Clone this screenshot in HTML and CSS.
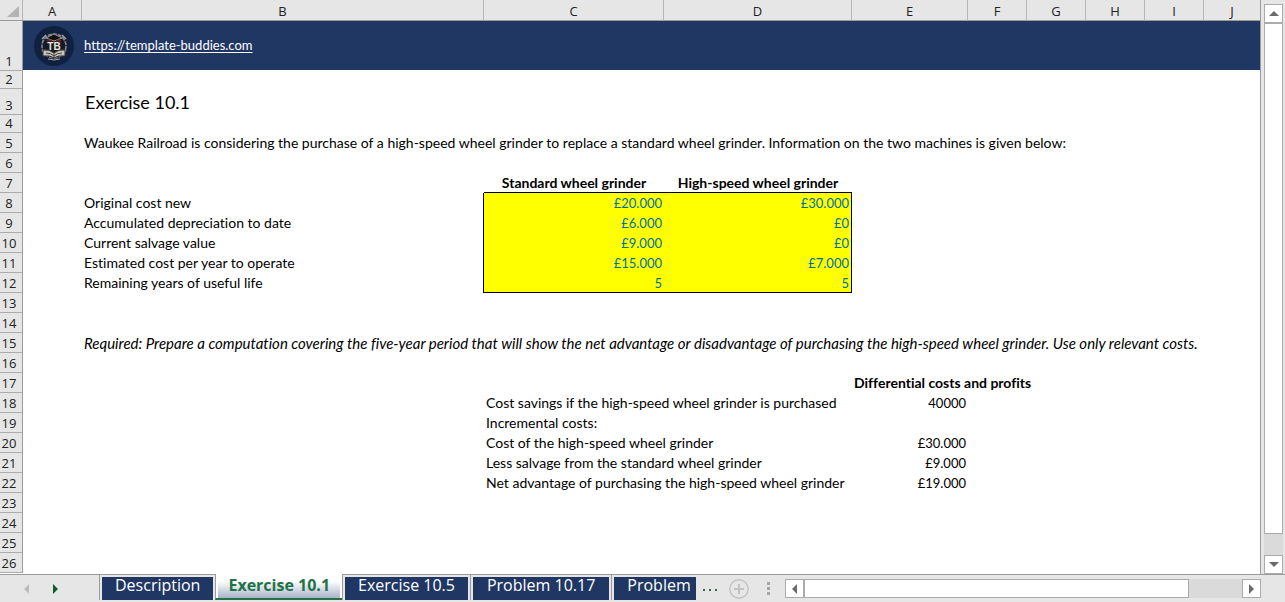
FILE: index.html
```html
<!DOCTYPE html>
<html lang="en">
<head>
<meta charset="utf-8">
<title>Exercise 10.1</title>
<link rel="stylesheet" href="styles.css">
</head>
<body>
<div class="workbook">
  <div class="main">
    <div class="sheet">
      <table class="grid">
        <colgroup>
          <col class="w-head"><col class="w-unit"><col class="w-b"><col class="w-c"><col class="w-d"><col class="w-e"><col class="w-unit"><col class="w-unit"><col class="w-unit"><col class="w-unit"><col>
        </colgroup>
        <thead>
          <tr><th class="corner"><svg width="12" height="11" viewBox="0 0 12 11" aria-hidden="true"><path d="M12 0v11H0z" fill="#b4b4b4"/></svg></th><th scope="col">A</th><th scope="col">B</th><th scope="col">C</th><th scope="col">D</th><th scope="col">E</th><th scope="col">F</th><th scope="col">G</th><th scope="col">H</th><th scope="col">I</th><th scope="col">J</th></tr>
        </thead>
        <tbody>
          <tr class="banner"><th scope="row">1</th>
            <td class="logo-cell"><svg class="logo" width="40" height="40" viewBox="0 0 40 40" role="img" aria-label="Template Buddies">
              <circle cx="20" cy="20" r="20" fill="#10213f"/>
              <circle cx="20" cy="20" r="12" fill="#171a22" stroke="#85888a" stroke-width="1.6" stroke-dasharray="4 1"/>
              <path d="M12 12l8-4 8 4-8 3z" fill="#111" stroke="#9b9a98" stroke-width="1"/>
              <path d="M13 14.500h5M22 14.500h5" stroke="#6b2529" stroke-width="2"/>
              <path d="M8 13l4-4M32 13l-4-4M8 24l3 4M32 24l-3 4" stroke="#a4a29d" stroke-width="1.5"/>
              <path d="M9 24q6-1 11 3q5-4 11-3v6q-7-1-11 2q-4-3-11-2z" fill="#c9c4bb" stroke="#343434"/>
              <path d="M20 27v5M12 27q5 0 8 3q3-3 8-3" fill="none" stroke="#45413e"/>
              <path d="M14 33q6 2 12 0" fill="none" stroke="#aaa69f"/>
              <text x="20" y="24" text-anchor="middle" class="logo-text">TB</text>
            </svg></td>
            <td class="link-cell"><a href="https://template-buddies.com">https://template-buddies.com</a></td><td colspan="8"></td></tr>
          <tr class="short"><th scope="row">2</th><td colspan="10"></td></tr>
          <tr class="title"><th scope="row">3</th><td></td><td colspan="9">Exercise 10.1</td></tr>
          <tr class="short"><th scope="row">4</th><td colspan="10"></td></tr>
          <tr><th scope="row">5</th><td></td><td colspan="9">Waukee Railroad is considering the purchase of a high-speed wheel grinder to replace a standard wheel grinder. Information on the two machines is given below:</td></tr>
          <tr><th scope="row">6</th><td colspan="10"></td></tr>
          <tr><th scope="row">7</th><td></td><td></td><td class="heading center rule-bottom">Standard wheel grinder</td><td class="heading center rule-bottom">High-speed wheel grinder</td><td colspan="6"></td></tr>
          <tr><th scope="row">8</th><td></td><td class="rule-right">Original cost new</td><td class="number input">£20.000</td><td class="number input rule-right">£30.000</td><td colspan="6"></td></tr>
          <tr><th scope="row">9</th><td></td><td class="rule-right">Accumulated depreciation to date</td><td class="number input">£6.000</td><td class="number input rule-right">£0</td><td colspan="6"></td></tr>
          <tr><th scope="row">10</th><td></td><td class="rule-right">Current salvage value</td><td class="number input">£9.000</td><td class="number input rule-right">£0</td><td colspan="6"></td></tr>
          <tr><th scope="row">11</th><td></td><td class="rule-right">Estimated cost per year to operate</td><td class="number input">£15.000</td><td class="number input rule-right">£7.000</td><td colspan="6"></td></tr>
          <tr><th scope="row">12</th><td></td><td class="rule-right">Remaining years of useful life</td><td class="number input rule-bottom">5</td><td class="number input rule-right rule-bottom">5</td><td colspan="6"></td></tr>
          <tr><th scope="row">13</th><td colspan="10"></td></tr>
          <tr><th scope="row">14</th><td colspan="10"></td></tr>
          <tr><th scope="row">15</th><td></td><td colspan="9" class="required">Required: Prepare a computation covering the five-year period that will show the net advantage or disadvantage of purchasing the high-speed wheel grinder. Use only relevant costs.</td></tr>
          <tr><th scope="row">16</th><td colspan="10"></td></tr>
          <tr><th scope="row">17</th><td colspan="4"></td><td colspan="6" class="heading">Differential costs and profits</td></tr>
          <tr><th scope="row">18</th><td></td><td></td><td colspan="2">Cost savings if the high-speed wheel grinder is purchased</td><td class="number">40000</td><td colspan="5"></td></tr>
          <tr><th scope="row">19</th><td></td><td></td><td colspan="2">Incremental costs:</td><td colspan="6"></td></tr>
          <tr><th scope="row">20</th><td></td><td></td><td colspan="2">Cost of the high-speed wheel grinder</td><td class="number">£30.000</td><td colspan="5"></td></tr>
          <tr><th scope="row">21</th><td></td><td></td><td colspan="2">Less salvage from the standard wheel grinder</td><td class="number">£9.000</td><td colspan="5"></td></tr>
          <tr><th scope="row">22</th><td></td><td></td><td colspan="2">Net advantage of purchasing the high-speed wheel grinder</td><td class="number">£19.000</td><td colspan="5"></td></tr>
          <tr><th scope="row">23</th><td colspan="10"></td></tr>
          <tr><th scope="row">24</th><td colspan="10"></td></tr>
          <tr><th scope="row">25</th><td colspan="10"></td></tr>
          <tr><th scope="row">26</th><td colspan="10"></td></tr>
        </tbody>
      </table>
    </div>
    <div class="vscroll">
      <button class="arrow" aria-label="Scroll up"><svg width="10" height="5" viewBox="0 0 10 5"><path d="M5 0l5 5H0z"/></svg></button>
      <div class="track"><div class="thumb"></div></div>
      <button class="arrow" aria-label="Scroll down"><svg width="10" height="5" viewBox="0 0 10 5"><path d="M0 0h10L5 5z"/></svg></button>
    </div>
  </div>
  <div class="footer">
    <div class="nav">
      <button aria-label="Previous sheet" disabled><svg width="5" height="10" viewBox="0 0 5 10"><path d="M5 0v10L0 5z" fill="#bdbdbd"/></svg></button>
      <button aria-label="Next sheet"><svg width="5" height="10" viewBox="0 0 5 10"><path d="M0 0l5 5-5 5z" fill="#0f5c33"/></svg></button>
    </div>
    <div class="tabs">
      <div class="slot"><button class="tab">Description</button></div>
      <div class="slot current"><button class="tab">Exercise 10.1</button></div>
      <div class="slot after-current"><button class="tab">Exercise 10.5</button></div>
      <div class="slot"><button class="tab wide">Problem 10.17</button></div>
      <div class="slot"><button class="tab cut">Problem</button></div>
    </div>
    <button class="more" aria-label="More sheets"><svg width="14" height="2" viewBox="0 0 14 2" fill="#217346"><path d="M0 0h2v2H0zM6 0h2v2H6zM12 0h2v2h-2z"/></svg></button>
    <button class="add" aria-label="New sheet"><svg width="20" height="20" viewBox="0 0 20 20" fill="none" stroke="#c3c3c3"><circle cx="10" cy="10" r="9.2" stroke-width="1.4"/><path d="M10 5v10M5 10h10" stroke-width="2"/></svg></button>
    <svg class="grip" width="3" height="13" viewBox="0 0 3 13" fill="#a6a6a6" aria-hidden="true"><path d="M0 0h3v3H0zM0 5h3v3H0zM0 10h3v3H0z"/></svg>
    <div class="hscroll">
      <button class="arrow" aria-label="Scroll left"><svg width="5" height="10" viewBox="0 0 5 10"><path d="M5 0v10L0 5z"/></svg></button>
      <div class="track"><div class="thumb"></div></div>
      <button class="arrow" aria-label="Scroll right"><svg width="5" height="10" viewBox="0 0 5 10"><path d="M0 0l5 5-5 5z"/></svg></button>
    </div>
  </div>
</div>
</body>
</html>
```
FILE: styles.css
```css
* { box-sizing: border-box; }
body { margin: 0; background: #e6e6e6; }
button { margin: 0; padding: 0; border: 0; background: none; font: inherit; }
svg { display: block; }

.workbook { display: flex; flex-direction: column; height: 100vh; overflow: hidden; }
.main { display: flex; flex: 1; min-height: 0; }
.sheet { flex: 1; min-width: 0; overflow: hidden; background: #fff; border-right: 1px solid #9b9b9b; }

.grid { width: 100%; table-layout: fixed; border-collapse: separate; border-spacing: 0; font: 14px/18px Lato, Carlito, sans-serif; font-variant-ligatures: none; color: #000; }
.w-head { width: 23px; }
.w-unit { width: 59px; }
.w-b { width: 402px; }
.w-c { width: 180px; }
.w-d { width: 188px; }
.w-e { width: 116px; }

.grid tr { height: 20px; }
.grid td { padding: 0 2px 1px; white-space: nowrap; vertical-align: bottom; }
.grid th { padding: 0; background: #e6e6e6; font: 13px/18px "Open Sans", "Noto Sans", sans-serif; color: #222; text-align: center; vertical-align: bottom; }
.grid thead tr { height: 21px; }
.grid thead th { padding-top: 2px; border-bottom: 1px solid #9b9b9b; border-right: 1px solid #b5b5b5; }
.grid thead th:last-child { border-right: 0; }
.grid tbody th { border-right: 1px solid #9b9b9b; border-bottom: 1px solid #ababab; padding-right: 4px; }
.grid .corner svg { margin: 0 0 3px 7px; }

.grid .banner { height: 50px; }
.grid .short { height: 18px; }
.grid .short th { line-height: 17px; }
.grid .title { height: 26px; }
.grid .title td { font-size: 18px; line-height: 24px; padding-left: 3px; }
.grid .banner td { background: #203764; border-bottom: 1px solid #fff; vertical-align: middle; }
.grid .banner .logo-cell { padding: 0 0 0 11px; }
.banner a { color: #fff; font-size: 13px; text-underline-offset: 2px; }
.logo-text { font: bold 10px "Liberation Sans", sans-serif; fill: #e9e5dd; }

.grid .heading { font-weight: bold; }
.grid .center { text-align: center; }
.grid .number { font-size: 13px; text-align: right; }
.grid .required { font-size: 15px; font-style: italic; }
.grid .input { background: #ff0; color: #0070a0; }
.grid .rule-right { border-right: 1px solid #000; }
.grid .rule-bottom { padding-bottom: 0; border-bottom: 1px solid #000; }

.vscroll { display: flex; flex-direction: column; width: 24px; padding: 4px 2px 0 3px; }
.arrow { display: flex; flex: 0 0 19px; align-items: center; justify-content: center; border: 1px solid #ababab; background: #fff; fill: #6a6a6a; }
.track { display: flex; flex: 1; min-width: 0; min-height: 0; background: #dadada; }
.vscroll .track { flex-direction: column; }
.thumb { background: #fff; border: 1px solid #ababab; }
.vscroll .thumb { height: 96%; }

.footer { display: flex; flex: 0 0 28px; padding-right: 24px; border-top: 1px solid #9b9b9b; font: 16px/20px "Open Sans", "Noto Sans", sans-serif; }
.nav { display: flex; flex: 0 0 99px; align-items: center; gap: 24px; padding-left: 24px; }
.tabs { display: flex; flex: none; align-items: flex-start; }
.slot { padding: 2px 2px 0; border-left: 1px solid #9b9b9b; }
.tab { display: block; height: 23px; padding: 0 13px 7px; background: #203764; color: #fff; line-height: 16px; white-space: nowrap; }
.tab.wide { padding-left: 14px; padding-right: 14px; }
.tab.cut { padding-right: 5px; }
.current { margin-top: -1px; padding-top: 3px; background: #fff; border-bottom: 2px solid #217346; }
.current .tab { height: 21px; padding: 0 10px 5px; background: linear-gradient(#fff 20%, #a9b3c9); color: #217346; font-weight: bold; }
.more { margin-left: 5px; padding-top: 2px; }
.add { margin-left: 12px; }
.grip { flex: none; align-self: center; margin: 0 15px 0 18px; }
.hscroll { display: flex; flex: 1; min-width: 0; height: 19px; margin-top: 4px; }
.hscroll .thumb { width: 88%; }
```
